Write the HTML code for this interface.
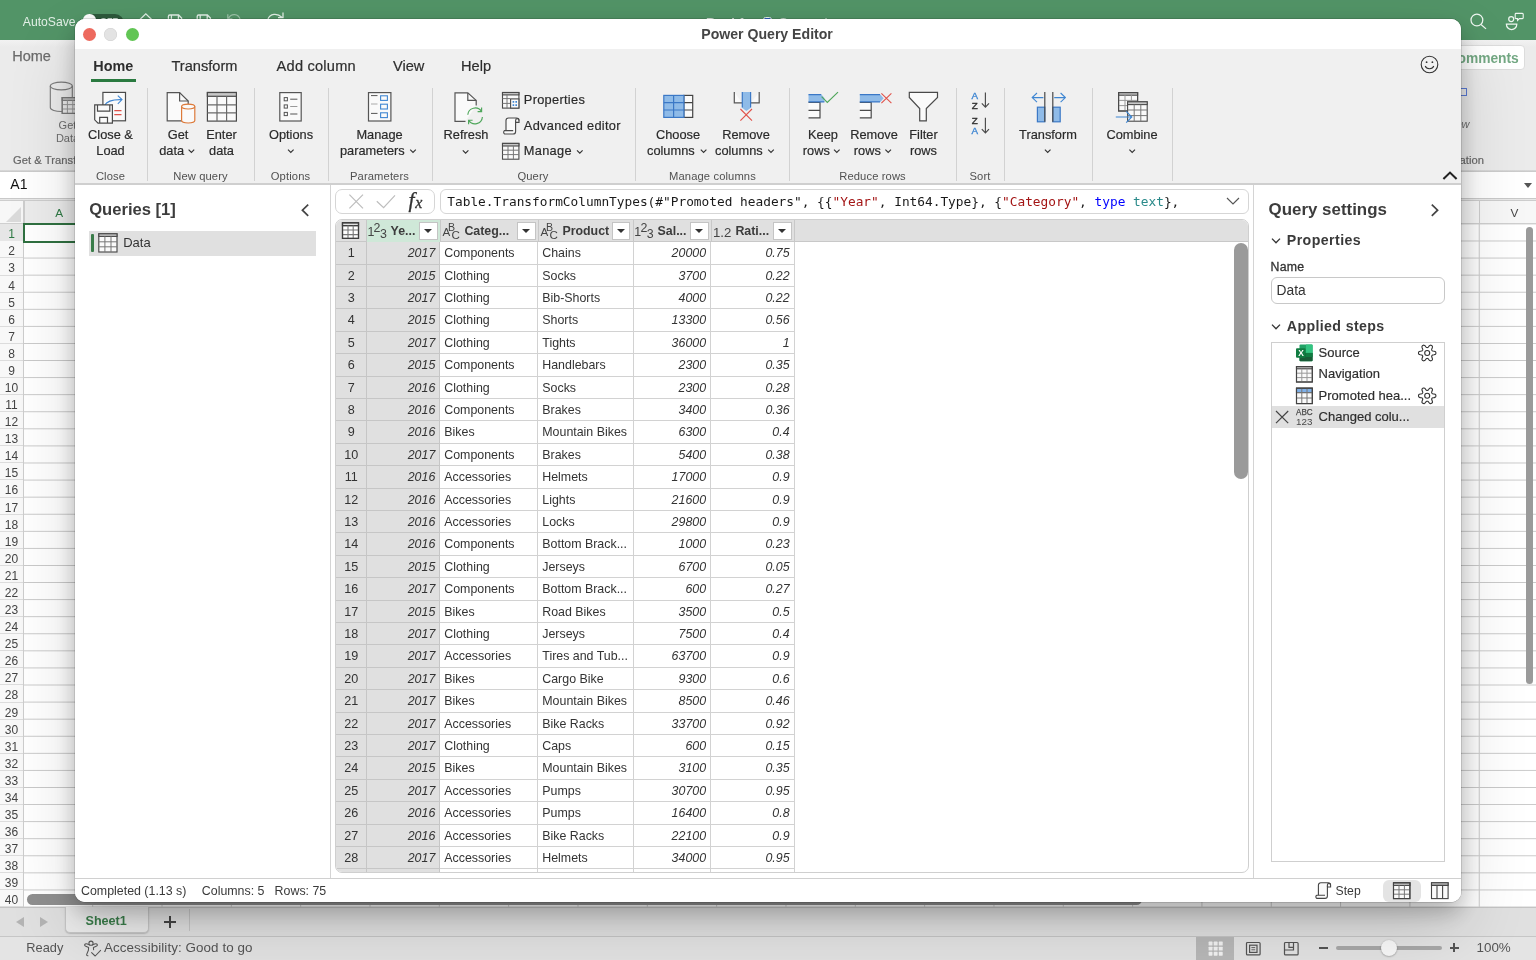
<!DOCTYPE html>
<html lang="en"><head><meta charset="utf-8"><title>Power Query Editor</title>
<style>
*{box-sizing:border-box}
html,body{margin:0;padding:0}
body{width:1536px;height:960px;overflow:hidden;position:relative;background:#fff;font-family:"Liberation Sans",sans-serif;color:#333}
.abs{position:absolute}
svg{display:block;overflow:visible}
/* ---------- Excel background ---------- */
#xl{position:absolute;left:0;top:0;width:1536px;height:960px;overflow:hidden;background:#fff}
#xl-title{position:absolute;left:0;top:0;width:1536px;height:40.2px;background:#529467}
#xl-rib{position:absolute;left:0;top:40.2px;width:1536px;height:131.8px;background:linear-gradient(#f2f2f2 0,#ebebeb 7px)}
#xl-fx{position:absolute;left:0;top:172px;width:1536px;height:25px;background:#fff}
#xl-gap{position:absolute;left:0;top:197.8px;width:1536px;height:3.6px;background:#e8e8e8;border-top:1px solid #c9c9c9;border-bottom:1px solid #cdcdcd}
#xl-colh{position:absolute;left:0;top:201.4px;width:1536px;height:22.9px;background:#f7f7f7;border-bottom:1px solid #cfcfcf}
#xl-rowh{position:absolute;left:0;top:224.3px;width:24.4px;height:683.2px;background:#f8f8f8;border-right:1.4px solid #cdcdcd}
#xl-cells{position:absolute;left:24.4px;top:224.3px;width:1512px;height:683.2px;
 background-image:linear-gradient(to right,#cbcbcb 1px,transparent 1px),linear-gradient(to bottom,#c8c8c8 1px,transparent 1px);
 background-size:69.33px 100%,100% 17.08px;background-position:68.2px 0,0 16.5px}
.xr{position:absolute;left:0;width:23px;height:17.08px;line-height:20.2px;text-align:center;font-size:12px;color:#444;border-bottom:1px solid #dcdcdc}
#xl-tabs{position:absolute;left:0;top:907px;width:1536px;height:28.5px;background:#e0e0e0;border-top:1px solid #c4c4c4}
#xl-stat{position:absolute;left:0;top:935.5px;width:1536px;height:24.5px;background:#e4e4e4;border-top:1px solid #c6c6c6;font-size:13.4px;color:#555}
/* ---------- PQ window ---------- */
#pq{position:absolute;left:75px;top:19px;width:1385.7px;height:883px;border-radius:10px;background:#fff;overflow:hidden;
 box-shadow:none}
#A{position:absolute;left:-75px;top:-19px;width:1536px;height:960px}
#pq-shadow{position:absolute;left:75px;top:19px;width:1385.7px;height:883px;border-radius:10px;box-shadow:0 10px 22px rgba(0,0,0,.24),0 30px 70px rgba(0,0,0,.14),0 0 0 .7px rgba(0,0,0,.16)}
#pq-title{position:absolute;left:75px;top:19px;width:1386.5px;height:30px;background:#fff}
#pq-title .t{position:absolute;left:-1.2px;width:100%;top:6.8px;text-align:center;font-weight:bold;font-size:14.1px;color:#454545;line-height:17px}
.tl{position:absolute;top:8.7px;width:13px;height:13px;border-radius:50%}
#pq-tabs{position:absolute;left:75px;top:49px;width:1386.5px;height:37px;background:#f0f0f0}
.tab{position:absolute;top:8.4px;font-size:14.6px;line-height:18px;color:#2e2e2e;white-space:nowrap;-webkit-text-stroke:.2px #2e2e2e}
#pq-rib{position:absolute;left:75px;top:86px;width:1386.5px;height:98.8px;background:#f0f0f0;border-bottom:2px solid #cfcfcf}
.sep{position:absolute;top:87.5px;width:1px;height:93.5px;background:#d2d2d2}
.gl{position:absolute;top:169.4px;font-size:11.2px;line-height:14px;color:#505050;text-align:center;white-space:nowrap;transform:translateX(-50%);letter-spacing:.12px}
.bl{position:absolute;font-size:12.8px;line-height:16px;color:#2a2a2a;text-align:center;white-space:nowrap;transform:translateX(-50%);margin-top:.6px;-webkit-text-stroke:.18px #2a2a2a}
.sl{position:absolute;font-size:12.8px;line-height:16px;color:#2a2a2a;white-space:nowrap;margin-top:.6px;-webkit-text-stroke:.18px #2a2a2a}
.sl.w{letter-spacing:.3px}
.cv{display:inline-block;width:5.6px;height:5.6px;position:relative}
/* left */
#pq-left{position:absolute;left:75px;top:184.6px;width:255.5px;height:694px;border-right:1px solid #d4d4d4;background:#fff}
/* center */
#fxbox{position:absolute;left:335.4px;top:189.2px;width:99.4px;height:24.6px;border:1px solid #d6d6d6;border-radius:7px;background:#fff}
#fbox{position:absolute;left:440px;top:189.2px;width:808.8px;height:24.6px;border:1px solid #d6d6d6;border-radius:6px;background:#fff;
 font-family:"DejaVu Sans Mono","Liberation Mono",monospace;font-size:12.8px;line-height:22.4px;white-space:pre;color:#1a1a1a;padding-left:6.3px;padding-top:.8px;overflow:hidden}
#grid{position:absolute;left:335.4px;top:218.8px;width:913.4px;height:654.6px;border:1px solid #cfcfcf;border-radius:7px;overflow:hidden;background:#fff}
#ghead{position:absolute;left:0;top:0;width:100%;height:22.3px;background:#e0e0e0;border-bottom:1px solid #c8c8c8}
.gr{position:absolute;left:0;height:22.4px;width:459px}
.c{position:absolute;top:0;height:22.4px;border-right:1px solid #d2d2d2;border-bottom:1px solid #d2d2d2;font-size:12.4px;line-height:23.4px;white-space:nowrap;overflow:hidden;color:#333;padding:0 4px}
.c0{left:0;width:30.6px;background:#e0e0e0;text-align:center;font-size:12.6px;line-height:22.2px;padding:0;border-color:#c6c6c6}
.c1{left:30.6px;width:73.3px;background:#e0e0e0;border-color:#c6c6c6}
.c2{left:103.9px;width:98px}
.c3{left:201.9px;width:95.4px}
.c4{left:297.3px;width:77.4px}
.c5{left:374.7px;width:83.5px}
.n{text-align:right;font-style:italic}
.hc{position:absolute;top:0;height:22.4px;font-weight:bold;font-size:12.4px;line-height:22px;color:#3c3c3c;white-space:nowrap}
.dd{position:absolute;top:1.8px;margin-left:-.6px;width:18.6px;height:18.2px;background:#fff;border:1px solid #c4c4c4}
.dd:after{content:"";position:absolute;left:4.3px;top:6.2px;border-left:4.2px solid transparent;border-right:4.2px solid transparent;border-top:4.6px solid #333}
/* right */
#pq-right{position:absolute;left:1252.9px;top:184.6px;width:208px;height:694px;border-left:1px solid #d4d4d4;background:#fff}
/* status */
#pq-stat{position:absolute;left:75px;top:878px;width:1386.5px;height:24px;border-top:1px solid #d0d0d0;background:#fff}
.st{position:absolute;top:884.3px;font-size:12.4px;line-height:14px;color:#3a3a3a;white-space:nowrap}
.stp{left:1318.6px;font-size:13px;line-height:16px;color:#2e2e2e;white-space:nowrap;-webkit-text-stroke:.18px #2e2e2e}
#xl,#pq{will-change:transform}

</style></head>
<body>
<div id="xl">
 <div id="xl-title">
  <div class="abs" style="left:22.8px;top:15px;font-size:12.2px;line-height:14px;color:#e3f0e7">AutoSave</div>
  <div class="abs" style="left:83px;top:13.9px;width:41px;height:18px;border-radius:9px;background:#2d5a3c"></div>
  <div class="abs" style="left:83.3px;top:14.4px;width:12.4px;height:12.4px;border-radius:50%;background:#fff"></div>
  <div class="abs" style="left:100px;top:16px;font-size:9px;font-weight:bold;color:#cfe3d5">OFF</div>
  <svg class="abs" style="left:134px;top:10px" width="160" height="24" viewBox="134 10 160 24" fill="none" stroke="#e3f0e7" stroke-width="1.3">
   <path d="M138.4 21 L145.8 13.8 L153.2 21 M140.6 19.5 V28 H151 V19.5"/>
   <path d="M168.4 16.4 A1.4 1.4 0 0 1 169.8 15 H178.6 L181.6 18 V28 H168.4 Z M171.4 15 V19.6 H178.4 V15"/>
   <path d="M197.2 16.4 A1.4 1.4 0 0 1 198.6 15 H207.4 L210.4 18 V28 H197.2 Z M200.2 15 V19.6 H207.2 V15"/>
   <path d="M228.6 18.2 C231 13.4 238.4 13.2 240.2 19.6 M227.8 14.2 V18.8 H232.4" stroke="#9cc3a8"/>
   <path d="M267.8 19.6 C269.8 13 277.6 13 281.8 17.2 M283 12.6 V17.6 H278"/>
  </svg>
  <div class="abs" style="left:706px;top:14.7px;font-size:13px;font-weight:bold;line-height:15px;color:#e3f0e7;white-space:nowrap">Book1</div>
  <div class="abs" style="left:762.7px;top:16.6px;width:9px;height:10px;border-radius:2.5px;background:#2f62c8;border:1px solid #e3f0e7"></div>
  <div class="abs" style="left:779px;top:14.7px;font-size:13px;line-height:15px;color:#cfe3d5;white-space:nowrap;letter-spacing:2.9px">Saved</div>
  <svg class="abs" style="left:1468px;top:11px" width="60" height="22" viewBox="1468 11 60 22" fill="none" stroke="#eef6f0" stroke-width="1.25">
   <circle cx="1476.9" cy="20" r="5.9"/><path d="M1481 24.5 L1486 28.9"/>
   <circle cx="1511.2" cy="19.1" r="2.5"/><path d="M1506.4 24.2 H1516.8 A5.2 5.4 0 0 1 1506.4 24.2 Z"/><path d="M1516 13.4 H1522.4 A.8 .8 0 0 1 1523.2 14.2 V17.8 A.8 .8 0 0 1 1522.4 18.6 H1519.4 L1517.6 20.4 V18.6 H1516 A.8 .8 0 0 1 1515.2 17.8 V14.2 A.8 .8 0 0 1 1516 13.4 Z" stroke-width="1.1"/>
  </svg>
 </div>
 <div id="xl-rib">
  <div class="abs" style="left:12.2px;top:7px;font-size:14.5px;line-height:18px;color:#6c6c6c;-webkit-text-stroke:.25px #6c6c6c">Home</div>
  <svg class="abs" style="left:45px;top:35.8px" width="40" height="45" viewBox="45 76 40 45" fill="none" stroke="#7a7a7a" stroke-width="1.1">
   <ellipse cx="61.3" cy="86" rx="11" ry="3.9"/><path d="M50.3 86 V107.6 A11 3.9 0 0 0 62 111.5 M72.3 86 V97.5"/>
   <rect x="62.2" y="97.6" width="16" height="15.8" fill="#ebebeb"/><rect x="62.2" y="97.6" width="16" height="2.8" fill="#c2c2c2"/><path d="M62.2 104.6 H78.2 M62.2 109 H78.2 M67.4 100.4 V113.4 M72.8 100.4 V113.4" stroke="#999" stroke-width="1"/><rect x="62.2" y="97.6" width="16" height="15.8"/>
  </svg>
  <div class="abs" style="left:58.6px;top:77.6px;font-size:11px;line-height:14px;color:#6e6e6e;white-space:nowrap">Get</div>
  <div class="abs" style="left:55.9px;top:90.5px;font-size:11px;line-height:14px;color:#6e6e6e;white-space:nowrap">Data</div>
  <div class="abs" style="left:13px;top:113.1px;font-size:11.2px;line-height:14px;color:#686868;white-space:nowrap;letter-spacing:.05px;-webkit-text-stroke:.2px #686868">Get &amp; Transform Data</div>
  <!-- right side remnants -->
  <div class="abs" style="left:1400px;top:5.2px;width:124.5px;height:24.8px;border-radius:4px;background:#fff;border:1px solid #dcdcdc"></div>
  <div class="abs" style="left:1447.5px;top:9px;font-size:13.8px;font-weight:bold;line-height:17px;color:#73a883;white-space:nowrap;margin-top:1px">Comments</div>
  <div class="abs" style="left:1458.5px;top:47.5px;width:8px;height:8px;border:1.6px solid #5b7bd6"></div>
  <div class="abs" style="left:1445.9px;top:78px;font-size:11px;font-style:italic;color:#6c6c6c;white-space:nowrap">View</div>
  <div class="abs" style="left:1427px;top:113.1px;font-size:11.2px;line-height:14px;color:#686868;white-space:nowrap;letter-spacing:.05px;-webkit-text-stroke:.2px #686868">Automation</div>
 </div>
 <div id="xl-fx">
  <div class="abs" style="left:0;top:-1.8px;width:1536px;height:1.8px;background:linear-gradient(#dcdcdc,#c6c6c6)"></div>
  <div class="abs" style="left:10.3px;top:3.6px;font-size:14px;line-height:16px;color:#111">A1</div>
  <div class="abs" style="left:1523.5px;top:10.5px;width:0;height:0;border-left:4.2px solid transparent;border-right:4.2px solid transparent;border-top:5.5px solid #555"></div>
 </div>
 <div id="xl-gap"></div>
 <div id="xl-colh">
  <div class="abs" style="left:5.8px;top:5.4px;width:0;height:0;border-left:15px solid transparent;border-bottom:15px solid #dadada"></div>
  <div class="abs" style="left:23.2px;top:0;width:1.4px;height:22.9px;background:#cdcdcd"></div>
  <div class="abs" style="left:24.6px;top:0;width:68.4px;height:22.9px;background:#ececec"></div>
  <div class="abs" style="left:55.2px;top:5px;font-size:11.8px;line-height:14px;color:#2f7a45">A</div>
  <div class="abs" style="left:1479px;top:0;width:1px;height:22.9px;background:#cdcdcd"></div>
  <div class="abs" style="left:1510.4px;top:5px;font-size:11.8px;line-height:14px;color:#444">V</div>
 </div>
 <div id="xl-cells"></div>
 <div id="xl-rowh">
<div class="xr" style="top:0.00px">1</div>
<div class="xr" style="top:17.08px">2</div>
<div class="xr" style="top:34.16px">3</div>
<div class="xr" style="top:51.24px">4</div>
<div class="xr" style="top:68.32px">5</div>
<div class="xr" style="top:85.40px">6</div>
<div class="xr" style="top:102.48px">7</div>
<div class="xr" style="top:119.56px">8</div>
<div class="xr" style="top:136.64px">9</div>
<div class="xr" style="top:153.72px">10</div>
<div class="xr" style="top:170.80px">11</div>
<div class="xr" style="top:187.88px">12</div>
<div class="xr" style="top:204.96px">13</div>
<div class="xr" style="top:222.04px">14</div>
<div class="xr" style="top:239.12px">15</div>
<div class="xr" style="top:256.20px">16</div>
<div class="xr" style="top:273.28px">17</div>
<div class="xr" style="top:290.36px">18</div>
<div class="xr" style="top:307.44px">19</div>
<div class="xr" style="top:324.52px">20</div>
<div class="xr" style="top:341.60px">21</div>
<div class="xr" style="top:358.68px">22</div>
<div class="xr" style="top:375.76px">23</div>
<div class="xr" style="top:392.84px">24</div>
<div class="xr" style="top:409.92px">25</div>
<div class="xr" style="top:427.00px">26</div>
<div class="xr" style="top:444.08px">27</div>
<div class="xr" style="top:461.16px">28</div>
<div class="xr" style="top:478.24px">29</div>
<div class="xr" style="top:495.32px">30</div>
<div class="xr" style="top:512.40px">31</div>
<div class="xr" style="top:529.48px">32</div>
<div class="xr" style="top:546.56px">33</div>
<div class="xr" style="top:563.64px">34</div>
<div class="xr" style="top:580.72px">35</div>
<div class="xr" style="top:597.80px">36</div>
<div class="xr" style="top:614.88px">37</div>
<div class="xr" style="top:631.96px">38</div>
<div class="xr" style="top:649.04px">39</div>
<div class="xr" style="top:666.12px">40</div>
 </div>
 <div class="abs" style="left:0;top:224.3px;width:23.2px;height:17.1px;background:#e6e6e6"></div>
 <div class="abs" style="left:0;top:224.3px;width:23px;height:17.08px;line-height:20.2px;text-align:center;font-size:12px;color:#2f7a45">1</div>
 <div class="abs" style="left:22.6px;top:222.9px;width:72px;height:20px;border:2.1px solid #2f7040;background:#fff"></div>
 <!-- scrollbars -->
 <div class="abs" style="left:1525.5px;top:227px;width:7px;height:457px;border-radius:3.5px;background:#9a9a9a"></div>
 <div class="abs" style="left:27px;top:893.5px;width:1115px;height:11px;border-radius:5.5px;background:#8f8f8f"></div>
 <div id="xl-tabs">
  <div class="abs" style="left:16px;top:8.5px;width:0;height:0;border-top:5.5px solid transparent;border-bottom:5.5px solid transparent;border-right:8px solid #b4b4b4"></div>
  <div class="abs" style="left:40px;top:8.5px;width:0;height:0;border-top:5.5px solid transparent;border-bottom:5.5px solid transparent;border-left:8px solid #b4b4b4"></div>
  <div class="abs" style="left:64.5px;top:-1px;width:84px;height:25.5px;background:#ebebeb;border:1px solid #c6c6c6;border-top:none;border-radius:0 0 5px 5px;box-shadow:0 1px 1.5px rgba(0,0,0,.18)"></div>
  <div class="abs" style="left:85.5px;top:5.5px;font-size:12.6px;font-weight:bold;line-height:15px;color:#3a7d4a">Sheet1</div>
  <div class="abs" style="left:163.5px;top:12.5px;width:12px;height:2px;background:#444"></div>
  <div class="abs" style="left:168.5px;top:7.5px;width:2px;height:12px;background:#444"></div>
  <div class="abs" style="left:189px;top:1px;width:1px;height:22px;background:#c6c6c6"></div>
 </div>
 <div id="xl-stat">
  <div class="abs" style="left:26.3px;top:3.2px;line-height:16px;font-size:12.8px">Ready</div>
  <svg class="abs" style="left:80px;top:.5px" width="24" height="24" viewBox="80 936 24 24" fill="none" stroke="#555" stroke-width="1.05" stroke-linecap="round" stroke-linejoin="round">
   <circle cx="91" cy="942.2" r="2.1"/>
   <path d="M89.2 943.9 L87.4 943 Q85.6 942.2 84.8 943.4 Q84.2 944.8 85.8 945.3 L88.6 946.4 L88.4 949.2 L86.7 953.4 Q86.4 954.9 88 954.7"/>
   <path d="M92.8 943.9 L94.6 943 Q96.4 942.2 97.2 943.4 Q97.8 944.8 96.2 945.3 L93.4 946.4 L93.6 948.8"/>
   <path d="M91.6 951.6 L95.2 955 L100.6 949.4"/>
  </svg>
  <div class="abs" style="left:104px;top:3.2px;line-height:16px;white-space:nowrap;letter-spacing:.08px">Accessibility: Good to go</div>
  <div class="abs" style="left:1195.6px;top:0;width:38.6px;height:24px;background:#b9b9b9"></div>
  <svg class="abs" style="left:1207px;top:3px" width="100" height="17" viewBox="0 0 100 17" fill="none" stroke="#fff" stroke-width="1.2">
   <g fill="#f4f4f4" stroke="none"><rect x="1.6" y="1.6" width="3.9" height="3.9" rx=".6"/><rect x="6.7" y="1.6" width="3.9" height="3.9" rx=".6"/><rect x="11.8" y="1.6" width="3.9" height="3.9" rx=".6"/><rect x="1.6" y="6.7" width="3.9" height="3.9" rx=".6"/><rect x="6.7" y="6.7" width="3.9" height="3.9" rx=".6"/><rect x="11.8" y="6.7" width="3.9" height="3.9" rx=".6"/><rect x="1.6" y="11.8" width="3.9" height="3.9" rx=".6"/><rect x="6.7" y="11.8" width="3.9" height="3.9" rx=".6"/><rect x="11.8" y="11.8" width="3.9" height="3.9" rx=".6"/></g>
   <g stroke="#555"><rect x="39.5" y="2.5" width="13.6" height="12.4" rx="1"/><rect x="42.6" y="5.2" width="7.4" height="7.2"/><path d="M44.4 7.6 H48.2 M44.4 9.8 H48.2" stroke-width=".9"/>
   <rect x="77.5" y="2.5" width="13.6" height="12.4" rx="1"/><path d="M77.5 10 H86.5 V2.5 M82 2.5 V7.4 H86.5"/></g>
  </svg>
  <div class="abs" style="left:1319px;top:10px;width:9px;height:2px;background:#555"></div>
  <div class="abs" style="left:1335.5px;top:9px;width:106px;height:4px;border-radius:2px;background:#a9a9a9"></div>
  <div class="abs" style="left:1380.5px;top:3px;width:16px;height:16px;border-radius:50%;background:#fafafa;box-shadow:0 .5px 2px rgba(0,0,0,.35)"></div>
  <div class="abs" style="left:1449.5px;top:10px;width:9px;height:2px;background:#555"></div>
  <div class="abs" style="left:1453px;top:6.5px;width:2px;height:9px;background:#555"></div>
  <div class="abs" style="left:1476.5px;top:3.2px;line-height:16px">100%</div>
 </div>
</div>
<div id="pq-shadow"></div>

<div id="pq"><div id="A">
<div id="pq-title">
 <div class="tl" style="left:8px;background:#ed6a5e"></div>
 <div class="tl" style="left:29.3px;background:#e3e3e3;box-shadow:inset 0 0 0 .5px #d0d0d0"></div>
 <div class="tl" style="left:50.8px;background:#61c554"></div>
 <div class="t">Power Query Editor</div>
</div>
<div id="pq-tabs">
 <div class="tab" style="left:18.3px;font-weight:bold;font-size:14.4px;-webkit-text-stroke:0">Home</div>
 <div class="abs" style="left:16px;top:30px;width:45px;height:3px;background:#2a7a40"></div>
 <div class="tab" style="left:96.5px">Transform</div>
 <div class="tab" style="left:201.6px;letter-spacing:.22px">Add column</div>
 <div class="tab" style="left:318px">View</div>
 <div class="tab" style="left:386px">Help</div>
 <svg class="abs" style="left:1344.5px;top:5.5px" width="19" height="19" viewBox="0 0 19 19" fill="none" stroke="#333" stroke-width="1.1"><circle cx="9.5" cy="9.5" r="8.3"/><circle cx="6.6" cy="7.2" r=".9" fill="#333" stroke="none"/><circle cx="12.4" cy="7.2" r=".9" fill="#333" stroke="none"/><path d="M5.2 11 C6.5 14.6 12.5 14.6 13.8 11"/></svg>
</div>

<div id="pq-rib"></div>
<div class="sep" style="left:147.2px"></div><div class="sep" style="left:253.8px"></div><div class="sep" style="left:327.6px"></div><div class="sep" style="left:431.9px"></div><div class="sep" style="left:635px"></div><div class="sep" style="left:789px"></div><div class="sep" style="left:955.9px"></div><div class="sep" style="left:1003.9px"></div><div class="sep" style="left:1092px"></div><div class="sep" style="left:1172.4px"></div>
<div class="gl" style="left:110.5px">Close</div><div class="gl" style="left:200.5px">New query</div><div class="gl" style="left:290.5px">Options</div><div class="gl" style="left:379.5px">Parameters</div><div class="gl" style="left:533px">Query</div><div class="gl" style="left:712.5px">Manage columns</div><div class="gl" style="left:872.5px">Reduce rows</div><div class="gl" style="left:980px">Sort</div>
<!-- big button labels -->
<div class="bl" style="left:110.5px;top:126.2px">Close &amp;<br>Load</div>
<div class="bl" style="left:178px;top:126.2px">Get</div><div class="sl" style="left:159.2px;top:142px">data</div>
<div class="bl" style="left:221.5px;top:126.2px">Enter<br>data</div>
<div class="bl" style="left:291px;top:126.2px">Options</div>
<div class="bl" style="left:379.5px;top:126.2px">Manage</div><div class="sl" style="left:340px;top:142px">parameters</div>
<div class="bl" style="left:466px;top:126.2px">Refresh</div>
<div class="bl" style="left:678px;top:126.2px">Choose</div><div class="sl" style="left:647px;top:142px">columns</div>
<div class="bl" style="left:746px;top:126.2px">Remove</div><div class="sl" style="left:715px;top:142px">columns</div>
<div class="bl" style="left:823px;top:126.2px">Keep</div><div class="sl" style="left:802.8px;top:142px">rows</div>
<div class="bl" style="left:874px;top:126.2px">Remove</div><div class="sl" style="left:853.8px;top:142px">rows</div>
<div class="bl" style="left:923.5px;top:126.2px">Filter<br>rows</div>
<div class="bl" style="left:1048px;top:126.2px">Transform</div>
<div class="bl" style="left:1132px;top:126.2px">Combine</div>
<div class="sl w" style="left:523.8px;top:91.6px">Properties</div>
<div class="sl w" style="left:523.8px;top:117px">Advanced editor</div>
<div class="sl w" style="left:523.8px;top:142.6px">Manage</div>
<svg class="abs" style="left:75px;top:86px" width="1386.5" height="98" viewBox="75 86 1386.5 98" fill="none" stroke-linecap="butt">
 <!-- chevrons -->
 <g stroke="#333" stroke-width="1.15" fill="none">
  <path d="M188.6 149.6 l2.8 2.8 l2.8 -2.8"/>
  <path d="M288 149.6 l2.8 2.8 l2.8 -2.8"/>
  <path d="M410.2 149.6 l2.8 2.8 l2.8 -2.8"/>
  <path d="M462.8 150.4 l2.8 2.8 l2.8 -2.8"/>
  <path d="M577 150.4 l2.8 2.8 l2.8 -2.8"/>
  <path d="M700.8 149.6 l2.8 2.8 l2.8 -2.8"/>
  <path d="M768.2 149.6 l2.8 2.8 l2.8 -2.8"/>
  <path d="M834 149.6 l2.8 2.8 l2.8 -2.8"/>
  <path d="M885.4 149.6 l2.8 2.8 l2.8 -2.8"/>
  <path d="M1044.9 149.6 l2.8 2.8 l2.8 -2.8"/>
  <path d="M1129.4 149.6 l2.8 2.8 l2.8 -2.8"/>
 </g>
 <!-- Close & Load -->
 <g stroke="#4a4a4a" stroke-width="1.2">
  <rect x="102.9" y="92.4" width="22.6" height="28.4" fill="#fafafa"/>
  <path d="M104.5 105.5 C106.5 101.5 111 99.3 121.5 99.6 M117.8 95.6 L122 99.6 L117.8 103.8" stroke="#3f86d2" stroke-width="1.1" fill="none"/>
  <path d="M114.3 110.6 H121.5 M114.3 114.6 H121.5" stroke="#e0524a" stroke-width="1.1"/>
  <path d="M94.7 104.9 H112.4 V123.1 H98 L94.7 119.8 Z" fill="#fafafa"/>
  <path d="M97.5 104.9 V111.2 H109.8 V104.9 M99.7 123.1 V117.3 H107.5 V123.1"/>
 </g>
 <!-- Get data -->
 <g stroke="#555" stroke-width="1.2">
  <path d="M167.2 92.6 H179.6 L188.2 101 V120.8 H167.2 Z" fill="#fafafa"/>
  <path d="M179.6 92.6 V101 H188.2"/>
  <path d="M181.6 106.6 V120.6 A6.6 2.4 0 0 0 194.8 120.6 V106.6" fill="#fafafa" stroke="#dd7a3a"/>
  <ellipse cx="188.2" cy="106.6" rx="6.6" ry="2.4" fill="#fafafa" stroke="#dd7a3a"/>
 </g>
 <!-- Enter data -->
 <g stroke="#4a4a4a" stroke-width="1.2">
  <rect x="207.4" y="92.5" width="29" height="28.6" fill="#fafafa"/>
  <rect x="207.4" y="92.5" width="29" height="3.8" fill="#c8c8c8"/>
  <path d="M207.4 104.8 H236.4 M207.4 112.8 H236.4 M217 96.3 V121.1 M226.6 96.3 V121.1" stroke="#6a6a6a"/>
 </g>
 <!-- Options -->
 <g stroke="#555" stroke-width="1.2">
  <rect x="279.8" y="92.6" width="21.4" height="28.4" fill="#fafafa"/>
  <g stroke-width="1"><rect x="284.2" y="97.6" width="3.2" height="3.2"/><rect x="284.2" y="104.9" width="3.2" height="3.2"/><rect x="284.2" y="112.4" width="3.2" height="3.2"/>
  <path d="M290.2 99.2 H297.4 M290.2 114 H297.4"/><path d="M290.2 106.5 H297.4" stroke="#999"/></g>
 </g>
 <!-- Manage parameters -->
 <g stroke="#555" stroke-width="1.2">
  <rect x="368.5" y="92.6" width="22.4" height="28.4" fill="#fafafa"/>
  <g stroke-width="1"><path d="M371 95.6 H377.5 M371 113.4 H377.5"/><path d="M371 104 H377.5" stroke="#aaa"/></g>
  <g stroke="#3f86d2" stroke-width="1.1"><rect x="380.6" y="95.8" width="6.8" height="4.6"/><rect x="380.6" y="104.2" width="6.8" height="4.8"/><rect x="380.6" y="112.8" width="6.8" height="4.8"/></g>
 </g>
 <!-- Refresh -->
 <g stroke="#555" stroke-width="1.2">
  <path d="M476.2 105.5 V100.4 L467.8 92.9 H455 V121.3 H465.5" fill="#fafafa"/>
  <path d="M467.8 92.9 V100.4 H476.2"/>
  <g stroke="#4ea65a" stroke-width="1.15" fill="none">
   <path d="M467.8 114.8 A7.4 7.4 0 0 1 481.4 111.4 M482.4 117 A7.4 7.4 0 0 1 468.8 120.4"/>
   <path d="M477.6 111.6 H481.6 V107.6 M472.6 120.2 H468.6 V124.2"/>
  </g>
 </g>
 <!-- Properties small icon -->
 <g stroke="#4a4a4a" stroke-width="1.1">
  <rect x="502.5" y="92.5" width="16.4" height="15.6" fill="#fafafa"/>
  <rect x="502.5" y="92.5" width="16.4" height="2.4" fill="#c8c8c8"/>
  <path d="M502.5 98.6 H510 M502.5 103.4 H510 M507 95 V108.1" stroke="#777" stroke-width="1"/>
  <rect x="510.6" y="98.9" width="8.3" height="9.2" fill="#fafafa"/>
  <path d="M512.6 101.8 h1.6 M515.4 101.8 h1.6 M512.6 105.2 h1.6 M515.4 105.2 h1.6" stroke="#3f86d2" stroke-width="1.7"/>
 </g>
 <!-- Advanced editor icon (scroll) -->
 <g stroke="#4a4a4a" stroke-width="1.15" fill="#fafafa">
  <path d="M506 131 V120.6 A2.6 2.6 0 0 1 508.6 118 H516.4 A2.6 2.6 0 0 1 519 120.6 V122.4 H515.6 V131.4 A2.6 2.6 0 0 1 513 134 H504.6 A2 2 0 0 1 504.6 130.6 H513.2"/>
  <path d="M515.6 122.4 V120.4 A1.7 1.7 0 0 1 519 120.4" fill="none"/>
 </g>
 <!-- Manage small icon -->
 <g stroke="#4a4a4a" stroke-width="1.1">
  <rect x="502.5" y="143.4" width="16.4" height="15.8" fill="#fafafa"/>
  <rect x="502.5" y="143.4" width="16.4" height="2.6" fill="#c8c8c8"/>
  <path d="M502.5 150.2 H518.9 M502.5 154.6 H518.9 M508 146 V159.2 M513.4 146 V159.2" stroke="#777" stroke-width="1"/>
 </g>
 <!-- Choose columns -->
 <g stroke-width="1.2">
  <rect x="683.9" y="95.4" width="8.8" height="22" fill="#fafafa" stroke="#444"/>
  <path d="M683.9 102.6 H692.7 M683.9 110 H692.7" stroke="#444"/>
  <rect x="663.8" y="95.4" width="20.1" height="22" fill="#8fbbe8" stroke="#3b78c6"/>
  <path d="M663.8 102.6 H683.9 M663.8 110 H683.9 M673.6 95.4 V117.4" stroke="#3b78c6"/>
 </g>
 <!-- Remove columns -->
 <g stroke-width="1.2">
  <path d="M734.3 92 V102.8 H742 M750.8 102.8 H759.2 V92" stroke="#555" fill="#fafafa"/>
  <path d="M742.3 92 V108 L746.4 111 L750.6 108 V92 Z" fill="#8fbbe8" stroke="none"/>
  <path d="M742.3 92 V107.4 M750.6 92 V107.4" stroke="#3b78c6"/>
  <path d="M740.4 109 L752 120.6 M752 109 L740.4 120.6" stroke="#e0524a" stroke-width="1.1"/>
 </g>
 <!-- Keep rows -->
 <g stroke-width="1.2">
  <path d="M808.5 102.4 H820 V117.8 H808.5 M808.5 110.4 H820" stroke="#4a4a4a" fill="#fafafa"/>
  <path d="M808.5 94.4 H821.4 L824.4 98 V101.9 H808.5 Z" fill="#8fbbe8" stroke="none"/>
  <path d="M808.5 94.6 H821.2 M808.5 101.9 H824.4" stroke="#3b78c6" stroke-width="1.3"/>
  <path d="M821.6 96.6 L827.3 102.4 L838 92.2" stroke="#4ea65a" stroke-width="1.15"/>
 </g>
 <!-- Remove rows -->
 <g stroke-width="1.2">
  <path d="M859.8 102.4 H871.2 V117.8 H859.8 M859.8 110.4 H871.2" stroke="#4a4a4a" fill="#fafafa"/>
  <path d="M859.8 94.4 H880.4 L883.6 98.2 L880.4 101.9 H859.8 Z" fill="#8fbbe8" stroke="none"/>
  <path d="M859.8 94.6 H880 M859.8 101.9 H880" stroke="#3b78c6" stroke-width="1.3"/>
  <path d="M881.4 93.4 L891.4 103.2 M891.4 93.4 L881.4 103.2" stroke="#e0524a" stroke-width="1.1"/>
 </g>
 <!-- Filter -->
 <path d="M909.3 92.4 H937.5 V97.4 L926.3 108.6 V120.8 H919.7 V108.6 L909.3 97.4 Z" fill="#fafafa" stroke="#4a4a4a" stroke-width="1.2"/>
 <!-- Sort -->
 <g stroke="#4a4a4a" stroke-width="1.15">
  <path d="M985.4 92.6 V107 M981.8 103.4 L985.4 107.2 L989 103.4"/>
  <path d="M985.4 117.7 V132.8 M981.8 129.2 L985.4 133 L989 129.2"/>
 </g>
 <!-- Transform -->
 <g stroke-width="1.2">
  <rect x="1037.4" y="107.2" width="7.4" height="14.6" fill="#8fbbe8" stroke="#3b78c6"/>
  <rect x="1052.8" y="107.2" width="7.4" height="14.6" fill="#8fbbe8" stroke="#3b78c6"/>
  <path d="M1044.8 92 V121.8 M1052.8 92 V121.8" stroke="#4a4a4a"/>
  <path d="M1043.4 97.6 H1032.4 M1037 93 L1032.2 97.6 L1037 102.2 M1054.2 97.6 H1065.2 M1060.6 93 L1065.4 97.6 L1060.6 102.2" stroke="#3f86d2" stroke-width="1.1"/>
 </g>
 <!-- Combine -->
 <g stroke="#4a4a4a" stroke-width="1.1">
  <rect x="1118.6" y="92.6" width="19" height="18.4" fill="#fafafa"/>
  <rect x="1118.6" y="92.6" width="19" height="2.6" fill="#c8c8c8"/>
  <path d="M1118.6 100.4 H1137.6 M1118.6 105.6 H1137.6 M1125 95.2 V111 M1131.4 95.2 V111" stroke="#999" stroke-width="1"/>
  <rect x="1118.6" y="92.6" width="19" height="18.4" fill="none"/>
  <rect x="1127.6" y="101.8" width="19.6" height="19.4" fill="#fafafa"/>
  <rect x="1127.6" y="101.8" width="19.6" height="2.8" fill="#c8c8c8"/>
  <path d="M1127.6 110 H1147.2 M1127.6 115.6 H1147.2 M1134.2 104.6 V121.2 M1140.8 104.6 V121.2" stroke="#777" stroke-width="1"/>
  <path d="M1115.8 117 H1131.6 M1126.2 111.4 L1131.8 117 L1126.2 122.6" stroke="#3f86d2" stroke-width="1.15" fill="none"/>
 </g>
 <!-- collapse caret -->
 <path d="M1443.4 179 L1450 172.6 L1456.6 179" stroke="#222" stroke-width="2.1" fill="none"/>
 <g font-family="Liberation Sans, sans-serif" font-size="9.8" stroke-width=".35">
  <text x="971.4" y="99" fill="#3f86d2" stroke="#3f86d2">A</text><text x="971.8" y="108.8" fill="#333" stroke="#333">Z</text>
  <text x="971.8" y="124.4" fill="#333" stroke="#333">Z</text><text x="971.4" y="134.3" fill="#3f86d2" stroke="#3f86d2">A</text>
 </g>
</svg>

<div id="pq-left"></div>
<div class="abs" style="left:89.2px;top:199.5px;font-size:16.6px;font-weight:bold;line-height:20px;color:#3c3c3c;white-space:nowrap">Queries [1]</div>
<svg class="abs" style="left:300px;top:203px" width="10" height="14" viewBox="0 0 10 14" fill="none" stroke="#444" stroke-width="1.7"><path d="M8.2 1.6 L2.4 7.2 L8.2 12.8"/></svg>
<div class="abs" style="left:88.8px;top:230.8px;width:226.8px;height:24.8px;background:#e0e0e0"></div>
<div class="abs" style="left:90.5px;top:234.4px;width:3px;height:17.4px;background:#3a7d4a;border-radius:1px"></div>
<svg class="abs" style="left:97.6px;top:233.4px" width="20" height="20" viewBox="0 0 20 20" fill="none" stroke="#4a4a4a" stroke-width="1.15"><rect x=".8" y=".8" width="18.2" height="18.2" fill="#fafafa"/><rect x=".8" y=".8" width="18.2" height="2.6" fill="#c8c8c8"/><path d="M.8 8.8 H19 M.8 13.8 H19 M6.9 3.4 V19 M13 3.4 V19" stroke="#777" stroke-width="1"/></svg>
<div class="abs" style="left:123.2px;top:235px;font-size:13px;line-height:16px;color:#333">Data</div>

<div id="fxbox"></div>
<svg class="abs" style="left:335px;top:189px" width="100" height="25" viewBox="335 189 100 25" fill="none" stroke="#bdbdbd" stroke-width="1.2">
 <path d="M349.4 194.6 L363 208.4 M363 194.6 L349.4 208.4"/>
 <path d="M376.8 201.2 L383.6 207.6 L395 195.4"/>
 <text x="408.6" y="207.4" font-family="Liberation Serif, serif" font-style="italic" font-size="21.5" fill="#333" stroke="#333" stroke-width=".3">f</text>
 <text x="415.2" y="207.6" font-family="Liberation Serif, serif" font-style="italic" font-size="16" fill="#333" stroke="#333" stroke-width=".3">x</text>
</svg>
<div id="fbox">Table.TransformColumnTypes(#"Promoted headers", {{<span style="color:#a31515">"Year"</span>, Int64.Type}, {<span style="color:#a31515">"Category"</span>, <span style="color:#0000ff">type</span> <span style="color:#2a8a8a">text</span>},</div>
<svg class="abs" style="left:1225px;top:196px" width="16" height="10" viewBox="0 0 16 10" fill="none" stroke="#555" stroke-width="1.15"><path d="M2 2 L8 8 L14 2"/></svg>
<div id="grid">
 <div id="ghead">
  <div class="abs" style="left:30.6px;top:0;width:73.3px;height:22.3px;background:#cfe8d8"></div>
  <div class="abs" style="left:30.1px;top:0;width:1px;height:22.3px;background:#c8c8c8"></div>
  <div class="abs" style="left:103.4px;top:0;width:1px;height:22.3px;background:#c8c8c8"></div>
  <div class="abs" style="left:201.4px;top:0;width:1px;height:22.3px;background:#c8c8c8"></div>
  <div class="abs" style="left:296.8px;top:0;width:1px;height:22.3px;background:#c8c8c8"></div>
  <div class="abs" style="left:374.2px;top:0;width:1px;height:22.3px;background:#c8c8c8"></div>
  <div class="abs" style="left:457.7px;top:0;width:1px;height:22.3px;background:#c8c8c8"></div>
  <svg class="abs" style="left:0;top:0" width="31" height="22" viewBox="336.4 219.8 31 22" fill="none" stroke="#3e3e3e" stroke-width="1.2"><rect x="342.9" y="222.6" width="16" height="15.6" fill="#fff"/><rect x="342.9" y="222.6" width="16" height="2.8" fill="#e2e2e2"/><path d="M342.9 225.4 H358.9" /><path d="M342.9 229.8 H358.9 M342.9 234.4 H358.9 M348.4 225.4 V238.2 M353.6 225.4 V238.2" stroke="#777" stroke-width="1.1"/><rect x="342.9" y="222.6" width="16" height="15.6"/></svg>
  <div class="hc" style="left:54.2px">Ye...</div><div class="dd" style="left:83.2px"></div>
  <div class="hc" style="left:128px">Categ...</div><div class="dd" style="left:181.2px"></div>
  <div class="hc" style="left:226px">Product</div><div class="dd" style="left:276px"></div>
  <div class="hc" style="left:321.2px">Sal...</div><div class="dd" style="left:354.2px"></div>
  <div class="hc" style="left:399px">Rati...</div><div class="dd" style="left:437.2px"></div>
  <svg class="abs" style="left:0;top:0" width="460" height="22" viewBox="336.4 219.8 460 22" font-family="Liberation Sans, sans-serif" fill="#444">
   <text x="367.8" y="235.8" font-size="12.4">1</text><text x="374.0" y="231.5" font-size="12.4">2</text><text x="380.4" y="237.8" font-size="12.4">3</text>
   <text x="442.9" y="235.8" font-size="11.6">A</text><text x="448.4" y="230.7" font-size="10.6">B</text><text x="451.9" y="238.6" font-size="11.6">C</text>
   <text x="540.9" y="235.8" font-size="11.6">A</text><text x="546.4" y="230.7" font-size="10.6">B</text><text x="549.9" y="238.6" font-size="11.6">C</text>
   <text x="634.6" y="235.8" font-size="12.4">1</text><text x="640.8" y="231.5" font-size="12.4">2</text><text x="647.2" y="237.8" font-size="12.4">3</text>
   <text x="713.4" y="236.4" font-size="13.2">1.2</text>
  </svg>
 </div>
<div class="gr" style="top:22.5px"><div class="c c0">1</div><div class="c c1 n">2017</div><div class="c c2">Components</div><div class="c c3">Chains</div><div class="c c4 n">20000</div><div class="c c5 n">0.75</div></div>
<div class="gr" style="top:44.9px"><div class="c c0">2</div><div class="c c1 n">2015</div><div class="c c2">Clothing</div><div class="c c3">Socks</div><div class="c c4 n">3700</div><div class="c c5 n">0.22</div></div>
<div class="gr" style="top:67.3px"><div class="c c0">3</div><div class="c c1 n">2017</div><div class="c c2">Clothing</div><div class="c c3">Bib-Shorts</div><div class="c c4 n">4000</div><div class="c c5 n">0.22</div></div>
<div class="gr" style="top:89.7px"><div class="c c0">4</div><div class="c c1 n">2015</div><div class="c c2">Clothing</div><div class="c c3">Shorts</div><div class="c c4 n">13300</div><div class="c c5 n">0.56</div></div>
<div class="gr" style="top:112.1px"><div class="c c0">5</div><div class="c c1 n">2017</div><div class="c c2">Clothing</div><div class="c c3">Tights</div><div class="c c4 n">36000</div><div class="c c5 n">1</div></div>
<div class="gr" style="top:134.5px"><div class="c c0">6</div><div class="c c1 n">2015</div><div class="c c2">Components</div><div class="c c3">Handlebars</div><div class="c c4 n">2300</div><div class="c c5 n">0.35</div></div>
<div class="gr" style="top:156.9px"><div class="c c0">7</div><div class="c c1 n">2016</div><div class="c c2">Clothing</div><div class="c c3">Socks</div><div class="c c4 n">2300</div><div class="c c5 n">0.28</div></div>
<div class="gr" style="top:179.3px"><div class="c c0">8</div><div class="c c1 n">2016</div><div class="c c2">Components</div><div class="c c3">Brakes</div><div class="c c4 n">3400</div><div class="c c5 n">0.36</div></div>
<div class="gr" style="top:201.7px"><div class="c c0">9</div><div class="c c1 n">2016</div><div class="c c2">Bikes</div><div class="c c3">Mountain Bikes</div><div class="c c4 n">6300</div><div class="c c5 n">0.4</div></div>
<div class="gr" style="top:224.1px"><div class="c c0">10</div><div class="c c1 n">2017</div><div class="c c2">Components</div><div class="c c3">Brakes</div><div class="c c4 n">5400</div><div class="c c5 n">0.38</div></div>
<div class="gr" style="top:246.5px"><div class="c c0">11</div><div class="c c1 n">2016</div><div class="c c2">Accessories</div><div class="c c3">Helmets</div><div class="c c4 n">17000</div><div class="c c5 n">0.9</div></div>
<div class="gr" style="top:268.9px"><div class="c c0">12</div><div class="c c1 n">2016</div><div class="c c2">Accessories</div><div class="c c3">Lights</div><div class="c c4 n">21600</div><div class="c c5 n">0.9</div></div>
<div class="gr" style="top:291.3px"><div class="c c0">13</div><div class="c c1 n">2016</div><div class="c c2">Accessories</div><div class="c c3">Locks</div><div class="c c4 n">29800</div><div class="c c5 n">0.9</div></div>
<div class="gr" style="top:313.7px"><div class="c c0">14</div><div class="c c1 n">2016</div><div class="c c2">Components</div><div class="c c3">Bottom Brack...</div><div class="c c4 n">1000</div><div class="c c5 n">0.23</div></div>
<div class="gr" style="top:336.1px"><div class="c c0">15</div><div class="c c1 n">2015</div><div class="c c2">Clothing</div><div class="c c3">Jerseys</div><div class="c c4 n">6700</div><div class="c c5 n">0.05</div></div>
<div class="gr" style="top:358.5px"><div class="c c0">16</div><div class="c c1 n">2017</div><div class="c c2">Components</div><div class="c c3">Bottom Brack...</div><div class="c c4 n">600</div><div class="c c5 n">0.27</div></div>
<div class="gr" style="top:380.9px"><div class="c c0">17</div><div class="c c1 n">2015</div><div class="c c2">Bikes</div><div class="c c3">Road Bikes</div><div class="c c4 n">3500</div><div class="c c5 n">0.5</div></div>
<div class="gr" style="top:403.3px"><div class="c c0">18</div><div class="c c1 n">2017</div><div class="c c2">Clothing</div><div class="c c3">Jerseys</div><div class="c c4 n">7500</div><div class="c c5 n">0.4</div></div>
<div class="gr" style="top:425.7px"><div class="c c0">19</div><div class="c c1 n">2017</div><div class="c c2">Accessories</div><div class="c c3">Tires and Tub...</div><div class="c c4 n">63700</div><div class="c c5 n">0.9</div></div>
<div class="gr" style="top:448.1px"><div class="c c0">20</div><div class="c c1 n">2017</div><div class="c c2">Bikes</div><div class="c c3">Cargo Bike</div><div class="c c4 n">9300</div><div class="c c5 n">0.6</div></div>
<div class="gr" style="top:470.5px"><div class="c c0">21</div><div class="c c1 n">2017</div><div class="c c2">Bikes</div><div class="c c3">Mountain Bikes</div><div class="c c4 n">8500</div><div class="c c5 n">0.46</div></div>
<div class="gr" style="top:492.9px"><div class="c c0">22</div><div class="c c1 n">2017</div><div class="c c2">Accessories</div><div class="c c3">Bike Racks</div><div class="c c4 n">33700</div><div class="c c5 n">0.92</div></div>
<div class="gr" style="top:515.3px"><div class="c c0">23</div><div class="c c1 n">2017</div><div class="c c2">Clothing</div><div class="c c3">Caps</div><div class="c c4 n">600</div><div class="c c5 n">0.15</div></div>
<div class="gr" style="top:537.7px"><div class="c c0">24</div><div class="c c1 n">2015</div><div class="c c2">Bikes</div><div class="c c3">Mountain Bikes</div><div class="c c4 n">3100</div><div class="c c5 n">0.35</div></div>
<div class="gr" style="top:560.1px"><div class="c c0">25</div><div class="c c1 n">2017</div><div class="c c2">Accessories</div><div class="c c3">Pumps</div><div class="c c4 n">30700</div><div class="c c5 n">0.95</div></div>
<div class="gr" style="top:582.5px"><div class="c c0">26</div><div class="c c1 n">2016</div><div class="c c2">Accessories</div><div class="c c3">Pumps</div><div class="c c4 n">16400</div><div class="c c5 n">0.8</div></div>
<div class="gr" style="top:604.9px"><div class="c c0">27</div><div class="c c1 n">2016</div><div class="c c2">Accessories</div><div class="c c3">Bike Racks</div><div class="c c4 n">22100</div><div class="c c5 n">0.9</div></div>
<div class="gr" style="top:627.3px"><div class="c c0">28</div><div class="c c1 n">2017</div><div class="c c2">Accessories</div><div class="c c3">Helmets</div><div class="c c4 n">34000</div><div class="c c5 n">0.95</div></div>
<div class="gr" style="top:649.7px"><div class="c c0"></div><div class="c c1 n"></div><div class="c c2"></div><div class="c c3"></div><div class="c c4 n"></div><div class="c c5 n"></div></div>
 <div class="abs" style="left:897.8px;top:22.8px;width:14px;height:236.6px;border-radius:7px;background:#9a9a9a"></div>
</div>

<div id="pq-right"></div>
<div class="abs" style="left:1268.6px;top:199.5px;font-size:16.9px;font-weight:bold;line-height:20px;color:#3c3c3c;white-space:nowrap">Query settings</div>
<svg class="abs" style="left:1430px;top:203px" width="10" height="14" viewBox="0 0 10 14" fill="none" stroke="#444" stroke-width="1.7"><path d="M1.8 1.6 L7.6 7.2 L1.8 12.8"/></svg>
<svg class="abs" style="left:1271px;top:237.4px" width="10" height="8" viewBox="0 0 10 8" fill="none" stroke="#333" stroke-width="1.3"><path d="M1 1.6 L5 5.8 L9 1.6"/></svg>
<div class="abs" style="left:1286.8px;top:231.1px;font-size:14.2px;font-weight:bold;letter-spacing:.42px;line-height:18px;color:#3a3a3a;white-space:nowrap">Properties</div>
<div class="abs" style="left:1270.6px;top:260.1px;font-size:12.3px;line-height:15px;color:#333;letter-spacing:.25px;-webkit-text-stroke:.3px #333">Name</div>
<div class="abs" style="left:1270.5px;top:277.4px;width:174.4px;height:26.6px;border:1px solid #c8c8c8;border-radius:6px;background:#fff"></div>
<div class="abs" style="left:1276.6px;top:283.1px;font-size:13.8px;line-height:16px;color:#333">Data</div>
<svg class="abs" style="left:1271px;top:322.8px" width="10" height="8" viewBox="0 0 10 8" fill="none" stroke="#333" stroke-width="1.3"><path d="M1 1.6 L5 5.8 L9 1.6"/></svg>
<div class="abs" style="left:1286.8px;top:316.7px;font-size:14.2px;font-weight:bold;letter-spacing:.36px;line-height:18px;color:#3a3a3a;white-space:nowrap">Applied steps</div>
<div class="abs" style="left:1270.5px;top:341.5px;width:174.4px;height:520px;border:1px solid #cfcfcf;background:#fff"></div>
<div class="abs" style="left:1271.5px;top:406.4px;width:172.4px;height:21.4px;background:#e0e0e0"></div>
<div class="abs stp" style="top:345px">Source</div>
<div class="abs stp" style="top:366.4px">Navigation</div>
<div class="abs stp" style="top:387.8px">Promoted hea...</div>
<div class="abs stp" style="top:409.2px">Changed colu...</div>
<svg class="abs" style="left:1254px;top:341px" width="207" height="90" viewBox="1254 341 207 90" fill="none">
 <!-- excel icon -->
 <g>
  <path d="M1300.5 344.6 H1311.6 A1 1 0 0 1 1312.6 345.6 V360.2 A1 1 0 0 1 1311.6 361.2 H1300.5 A1 1 0 0 1 1299.5 360.2 V345.6 A1 1 0 0 1 1300.5 344.6 Z" fill="#21a366"/>
  <path d="M1306 344.6 H1311.6 A1 1 0 0 1 1312.6 345.6 V352.9 H1306 Z" fill="#33c481"/>
  <path d="M1299.5 352.9 H1312.6 V360.2 A1 1 0 0 1 1311.6 361.2 H1300.5 A1 1 0 0 1 1299.5 360.2 Z" fill="#185c37"/>
  <path d="M1306 352.9 H1312.6 V357 H1306 Z" fill="#107c41"/>
  <rect x="1296" y="348.2" width="9.6" height="9.6" rx="1" fill="#107c41"/>
  <text x="1298.2" y="356.3" font-family="Liberation Sans, sans-serif" font-weight="bold" font-size="8.4" fill="#fff">X</text>
 </g>
 <!-- navigation table icon -->
 <g stroke="#444" stroke-width="1.1"><rect x="1296.5" y="366.6" width="15.8" height="15.4" fill="#fafafa"/><rect x="1296.5" y="366.6" width="15.8" height="2.2" fill="#c8c8c8"/><path d="M1296.5 373.2 H1312.3 M1296.5 377.6 H1312.3 M1301.8 368.8 V382 M1307 368.8 V382" stroke="#999" stroke-width="1"/><rect x="1296.5" y="366.6" width="15.8" height="15.4"/></g>
 <!-- promoted headers icon -->
 <g stroke="#444" stroke-width="1.1"><rect x="1296.5" y="388.2" width="15.8" height="15.4" fill="#fafafa"/><rect x="1296.5" y="388.2" width="15.8" height="4.4" fill="#7fb0e8"/><path d="M1296.5 392.6 H1312.3 M1296.5 398 H1312.3 M1301.8 388.2 V403.6 M1307 388.2 V403.6" stroke="#777" stroke-width="1"/><rect x="1296.5" y="388.2" width="15.8" height="15.4"/></g>
 <!-- X -->
 <path d="M1276 411 L1288.2 423.2 M1288.2 411 L1276 423.2" stroke="#444" stroke-width="1.2"/>
 <g font-family="Liberation Sans, sans-serif" fill="#4a4a4a"><text x="1296" y="414.7" font-size="8.3" textLength="16.6" lengthAdjust="spacingAndGlyphs" stroke="#4a4a4a" stroke-width=".25">ABC</text><text x="1296" y="425.4" font-size="9.8" textLength="16.4" lengthAdjust="spacing">123</text></g>
 <!-- gears -->
 <g stroke="#333" stroke-width="1.1" fill="none">
  <g transform="translate(1427.2 353)"><circle r="2.5"/><path d="M8.70 0.00 L8.64 0.57 L8.43 1.11 L7.87 1.57 L6.81 1.82 L5.75 1.95 L5.17 2.14 L4.88 2.40 L4.68 2.70 L4.52 3.02 L4.44 3.41 L4.57 4.00 L4.99 4.99 L5.29 6.04 L5.18 6.75 L4.81 7.20 L4.35 7.53 L3.83 7.77 L3.25 7.86 L2.58 7.60 L1.82 6.81 L1.18 5.96 L0.73 5.55 L0.36 5.43 L0.00 5.40 L-0.36 5.43 L-0.73 5.55 L-1.18 5.96 L-1.82 6.81 L-2.58 7.60 L-3.25 7.86 L-3.83 7.77 L-4.35 7.53 L-4.81 7.20 L-5.18 6.75 L-5.29 6.04 L-4.99 4.99 L-4.57 4.00 L-4.44 3.41 L-4.52 3.02 L-4.68 2.70 L-4.88 2.40 L-5.17 2.14 L-5.75 1.95 L-6.81 1.82 L-7.87 1.57 L-8.43 1.11 L-8.64 0.57 L-8.70 0.00 L-8.64 -0.57 L-8.43 -1.11 L-7.87 -1.57 L-6.81 -1.82 L-5.75 -1.95 L-5.17 -2.14 L-4.88 -2.40 L-4.68 -2.70 L-4.52 -3.02 L-4.44 -3.41 L-4.57 -4.00 L-4.99 -4.99 L-5.29 -6.04 L-5.18 -6.75 L-4.81 -7.20 L-4.35 -7.53 L-3.83 -7.77 L-3.25 -7.86 L-2.58 -7.60 L-1.82 -6.81 L-1.18 -5.96 L-0.73 -5.55 L-0.36 -5.43 L-0.00 -5.40 L0.36 -5.43 L0.73 -5.55 L1.18 -5.96 L1.82 -6.81 L2.58 -7.60 L3.25 -7.86 L3.83 -7.77 L4.35 -7.53 L4.81 -7.20 L5.18 -6.75 L5.29 -6.04 L4.99 -4.99 L4.57 -4.00 L4.44 -3.41 L4.52 -3.02 L4.68 -2.70 L4.88 -2.40 L5.17 -2.14 L5.75 -1.95 L6.81 -1.82 L7.87 -1.57 L8.43 -1.11 L8.64 -0.57 Z" stroke-linejoin="round"/></g>
  <g transform="translate(1427.2 395.8)"><circle r="2.5"/><path d="M8.70 0.00 L8.64 0.57 L8.43 1.11 L7.87 1.57 L6.81 1.82 L5.75 1.95 L5.17 2.14 L4.88 2.40 L4.68 2.70 L4.52 3.02 L4.44 3.41 L4.57 4.00 L4.99 4.99 L5.29 6.04 L5.18 6.75 L4.81 7.20 L4.35 7.53 L3.83 7.77 L3.25 7.86 L2.58 7.60 L1.82 6.81 L1.18 5.96 L0.73 5.55 L0.36 5.43 L0.00 5.40 L-0.36 5.43 L-0.73 5.55 L-1.18 5.96 L-1.82 6.81 L-2.58 7.60 L-3.25 7.86 L-3.83 7.77 L-4.35 7.53 L-4.81 7.20 L-5.18 6.75 L-5.29 6.04 L-4.99 4.99 L-4.57 4.00 L-4.44 3.41 L-4.52 3.02 L-4.68 2.70 L-4.88 2.40 L-5.17 2.14 L-5.75 1.95 L-6.81 1.82 L-7.87 1.57 L-8.43 1.11 L-8.64 0.57 L-8.70 0.00 L-8.64 -0.57 L-8.43 -1.11 L-7.87 -1.57 L-6.81 -1.82 L-5.75 -1.95 L-5.17 -2.14 L-4.88 -2.40 L-4.68 -2.70 L-4.52 -3.02 L-4.44 -3.41 L-4.57 -4.00 L-4.99 -4.99 L-5.29 -6.04 L-5.18 -6.75 L-4.81 -7.20 L-4.35 -7.53 L-3.83 -7.77 L-3.25 -7.86 L-2.58 -7.60 L-1.82 -6.81 L-1.18 -5.96 L-0.73 -5.55 L-0.36 -5.43 L-0.00 -5.40 L0.36 -5.43 L0.73 -5.55 L1.18 -5.96 L1.82 -6.81 L2.58 -7.60 L3.25 -7.86 L3.83 -7.77 L4.35 -7.53 L4.81 -7.20 L5.18 -6.75 L5.29 -6.04 L4.99 -4.99 L4.57 -4.00 L4.44 -3.41 L4.52 -3.02 L4.68 -2.70 L4.88 -2.40 L5.17 -2.14 L5.75 -1.95 L6.81 -1.82 L7.87 -1.57 L8.43 -1.11 L8.64 -0.57 Z" stroke-linejoin="round"/></g>
 </g>
</svg>

<div id="pq-stat"></div>
<div class="st" style="left:81px">Completed (1.13 s)</div>
<div class="st" style="left:201.8px">Columns: 5</div>
<div class="st" style="left:274.6px">Rows: 75</div>
<div class="abs" style="left:1382.5px;top:879.6px;width:38.2px;height:22.4px;border-radius:6px;background:#e4e4e4"></div>
<svg class="abs" style="left:1310px;top:879px" width="145" height="23" viewBox="1310 879 145 23" fill="none" stroke="#444" stroke-width="1.1">
 <path d="M1318.4 895.6 V885.2 A2.4 2.4 0 0 1 1320.8 882.8 H1328.2 A2.4 2.4 0 0 1 1330.6 885.2 V887 H1327.4 V896 A2.4 2.4 0 0 1 1325 898.4 H1316.8 A1.8 1.8 0 0 1 1316.8 895.2 H1325" fill="#fafafa"/>
 <path d="M1327.4 887 V885 A1.6 1.6 0 0 1 1330.6 885"/>
 <g><rect x="1393.5" y="882.8" width="16.4" height="15.8" fill="#fafafa"/><rect x="1393.5" y="882.8" width="16.4" height="2.6" fill="#c8c8c8"/><path d="M1393.5 889.8 H1409.9 M1393.5 894.2 H1409.9 M1399 885.4 V898.6 M1404.4 885.4 V898.6" stroke="#777" stroke-width="1"/><rect x="1393.5" y="882.8" width="16.4" height="15.8"/></g>
 <g><rect x="1431.5" y="882.8" width="16.6" height="15.8" fill="#fafafa"/><rect x="1431.5" y="882.8" width="16.6" height="2.6" fill="#c8c8c8"/><path d="M1431.5 885.4 H1448.1 M1437 885.4 V898.6 M1442.6 885.4 V898.6"/></g>
</svg>
<div class="st" style="left:1335.6px;font-size:12.2px">Step</div>

</div></div>
</body></html>
